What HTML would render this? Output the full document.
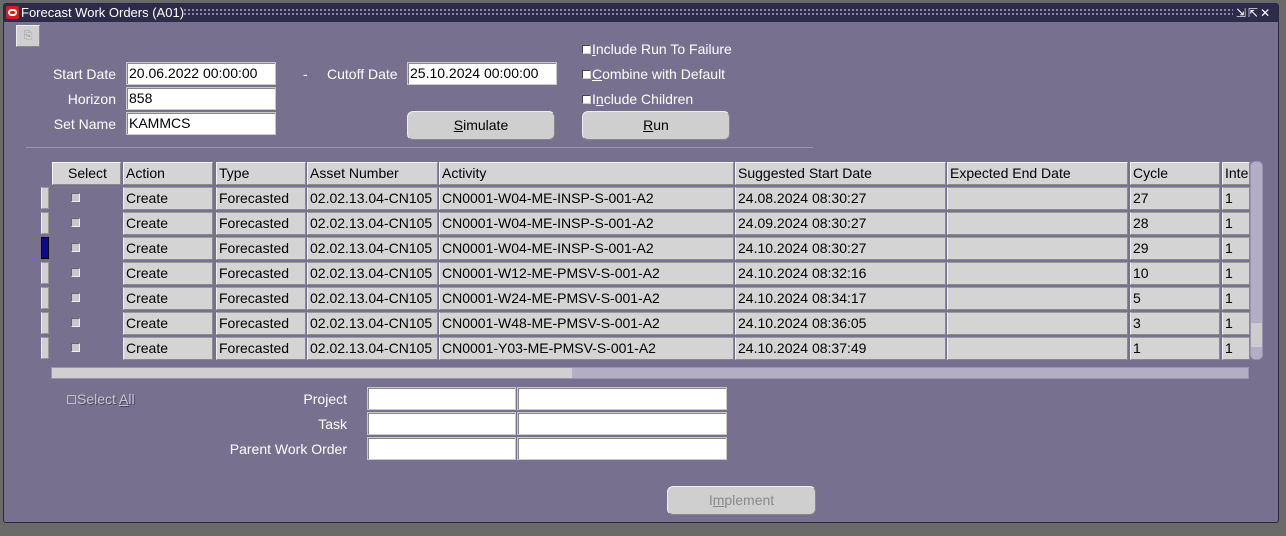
<!DOCTYPE html>
<html><head><meta charset="utf-8"><style>
*{box-sizing:border-box;margin:0;padding:0}
body{width:1286px;height:536px;background:#6a6a6a;position:relative;overflow:hidden;font-family:"Liberation Sans",sans-serif;font-size:14px;color:#000}
.a{position:absolute}
#win{left:3px;top:3px;width:1276px;height:520px;background:#77718f;border:1px solid #2a2840;border-radius:3px}
#tb{left:4px;top:4px;width:1274px;height:18px;background:#2e2b4a;color:#fff;font-size:13px;line-height:18px;padding-left:17px}
.dots{left:183px;top:8px;width:1050px;height:9px;background-image:radial-gradient(circle,#9c98b4 0.8px,transparent 1.2px);background-size:4px 4px}
.lbl{color:#fff;font-size:14px;text-align:right}
.fld{background:#fff;border:1px solid #c9c9c9;box-shadow:inset 1px 1px 0 #888;height:23px;line-height:21px;padding-left:2px;font-size:14px}
.btn{background:#cfcfcf;border:1px solid #eee;border-right-color:#888;border-bottom-color:#888;border-radius:6px;text-align:center;height:29px;line-height:27px}
.hd{background:#d4d4d4;border:1px solid #f4f4f4;border-right-color:#8a8a8a;border-bottom-color:#8a8a8a;height:23px;line-height:21px;padding-left:2px}
.c{background:#d4d4d4;border:1px solid #8a8a8a;border-top-color:#9a9a9a;border-left-color:#f0f0f0;height:23px;line-height:21px;padding-left:2px;overflow:hidden;white-space:nowrap}
.cb{width:9px;height:9px;background:#c8c8c8;border:1px solid #666;border-right-color:#eee;border-bottom-color:#eee}
.mk{width:8px;height:22px;background:#d0d0d0;border:1px solid #999;border-left-color:#eee}
.ck{color:#fff}
.ck i{display:inline-block;width:9px;height:9px;background:#fff;border:1px solid #444;border-right-color:#ccc;border-bottom-color:#ccc;margin-right:1px;vertical-align:0}
</style></head><body>
<div id="win" class="a"></div>
<div id="tb" class="a">Forecast Work Orders (A01)</div>
<div class="a" style="left:6px;top:6px;width:13px;height:13px;background:#d0201c;border-radius:2px"><div style="margin:3px 2px;width:9px;height:7px;border:2px solid #fff;border-radius:4px"></div></div>
<div class="a dots"></div>
<div class="a" style="left:1236px;top:5px;color:#fff;font-size:12px;line-height:16px;letter-spacing:2px">⇲⇱✕</div>
<div class="a" style="left:16px;top:25px;width:24px;height:22px;background:#cfcfcf;border:1px solid #eee;border-right-color:#888;border-bottom-color:#888;color:#999;font-size:11px;text-align:center;line-height:20px">⎘</div>

<div class="a lbl" style="left:20px;top:66px;width:96px">Start Date</div>
<div class="a lbl" style="left:20px;top:91px;width:96px">Horizon</div>
<div class="a lbl" style="left:20px;top:116px;width:96px">Set Name</div>
<div class="a fld" style="left:126px;top:62px;width:150px">20.06.2022 00:00:00</div>
<div class="a fld" style="left:126px;top:87px;width:150px">858</div>
<div class="a fld" style="left:126px;top:112px;width:150px">KAMMCS</div>
<div class="a lbl" style="left:303px;top:66px">-</div>
<div class="a lbl" style="left:327px;top:66px">Cutoff Date</div>
<div class="a fld" style="left:407px;top:62px;width:150px">25.10.2024 00:00:00</div>
<div class="a ck" style="left:582px;top:41px"><i></i><u>I</u>nclude Run To Failure</div>
<div class="a ck" style="left:582px;top:66px"><i></i><u>C</u>ombine with Default</div>
<div class="a ck" style="left:582px;top:91px"><i></i>I<u>n</u>clude Children</div>
<div class="a btn" style="left:407px;top:111px;width:148px"><u>S</u>imulate</div>
<div class="a btn" style="left:582px;top:111px;width:148px"><u>R</u>un</div>
<div class="a" style="left:26px;top:147px;width:787px;height:1px;background:#3a3656;border-bottom:1px solid #9a96b0"></div>

<div class="a hd" style="left:52px;top:162px;width:69px;text-align:center">Select</div>
<div class="a hd" style="left:123px;top:162px;width:90px">Action</div>
<div class="a hd" style="left:216px;top:162px;width:90px">Type</div>
<div class="a hd" style="left:307px;top:162px;width:131px">Asset Number</div>
<div class="a hd" style="left:439px;top:162px;width:295px">Activity</div>
<div class="a hd" style="left:735px;top:162px;width:211px">Suggested Start Date</div>
<div class="a hd" style="left:947px;top:162px;width:181px">Expected End Date</div>
<div class="a hd" style="left:1130px;top:162px;width:90px">Cycle</div>
<div class="a hd" style="left:1222px;top:162px;width:28px;overflow:hidden;white-space:nowrap">Interval</div>

<div class="a" style="left:1250px;top:161px;width:13px;height:199px;background:#b3aec6;border-radius:5px;border:1px solid #9993b0"></div>
<div class="a" style="left:1251px;top:323px;width:11px;height:24px;background:#ccc"></div>

<div id="rows"></div>
<!-- rows -->
<div class="a mk" style="left:41px;top:187px"></div><div class="a cb" style="left:71px;top:193px"></div>
<div class="a c" style="left:123px;top:187px;width:90px">Create</div><div class="a c" style="left:216px;top:187px;width:90px">Forecasted</div><div class="a c" style="left:307px;top:187px;width:131px">02.02.13.04-CN105</div><div class="a c" style="left:439px;top:187px;width:295px">CN0001-W04-ME-INSP-S-001-A2</div><div class="a c" style="left:735px;top:187px;width:211px">24.08.2024 08:30:27</div><div class="a c" style="left:947px;top:187px;width:181px"></div><div class="a c" style="left:1130px;top:187px;width:90px">27</div><div class="a c" style="left:1222px;top:187px;width:28px">1</div>
<div class="a mk" style="left:41px;top:212px"></div><div class="a cb" style="left:71px;top:218px"></div>
<div class="a c" style="left:123px;top:212px;width:90px">Create</div><div class="a c" style="left:216px;top:212px;width:90px">Forecasted</div><div class="a c" style="left:307px;top:212px;width:131px">02.02.13.04-CN105</div><div class="a c" style="left:439px;top:212px;width:295px">CN0001-W04-ME-INSP-S-001-A2</div><div class="a c" style="left:735px;top:212px;width:211px">24.09.2024 08:30:27</div><div class="a c" style="left:947px;top:212px;width:181px"></div><div class="a c" style="left:1130px;top:212px;width:90px">28</div><div class="a c" style="left:1222px;top:212px;width:28px">1</div>
<div class="a mk" style="left:41px;top:237px;background:#0a0a8a;border-color:#000"></div><div class="a cb" style="left:71px;top:243px"></div>
<div class="a c" style="left:123px;top:237px;width:90px">Create</div><div class="a c" style="left:216px;top:237px;width:90px">Forecasted</div><div class="a c" style="left:307px;top:237px;width:131px">02.02.13.04-CN105</div><div class="a c" style="left:439px;top:237px;width:295px">CN0001-W04-ME-INSP-S-001-A2</div><div class="a c" style="left:735px;top:237px;width:211px">24.10.2024 08:30:27</div><div class="a c" style="left:947px;top:237px;width:181px"></div><div class="a c" style="left:1130px;top:237px;width:90px">29</div><div class="a c" style="left:1222px;top:237px;width:28px">1</div>
<div class="a mk" style="left:41px;top:262px"></div><div class="a cb" style="left:71px;top:268px"></div>
<div class="a c" style="left:123px;top:262px;width:90px">Create</div><div class="a c" style="left:216px;top:262px;width:90px">Forecasted</div><div class="a c" style="left:307px;top:262px;width:131px">02.02.13.04-CN105</div><div class="a c" style="left:439px;top:262px;width:295px">CN0001-W12-ME-PMSV-S-001-A2</div><div class="a c" style="left:735px;top:262px;width:211px">24.10.2024 08:32:16</div><div class="a c" style="left:947px;top:262px;width:181px"></div><div class="a c" style="left:1130px;top:262px;width:90px">10</div><div class="a c" style="left:1222px;top:262px;width:28px">1</div>
<div class="a mk" style="left:41px;top:287px"></div><div class="a cb" style="left:71px;top:293px"></div>
<div class="a c" style="left:123px;top:287px;width:90px">Create</div><div class="a c" style="left:216px;top:287px;width:90px">Forecasted</div><div class="a c" style="left:307px;top:287px;width:131px">02.02.13.04-CN105</div><div class="a c" style="left:439px;top:287px;width:295px">CN0001-W24-ME-PMSV-S-001-A2</div><div class="a c" style="left:735px;top:287px;width:211px">24.10.2024 08:34:17</div><div class="a c" style="left:947px;top:287px;width:181px"></div><div class="a c" style="left:1130px;top:287px;width:90px">5</div><div class="a c" style="left:1222px;top:287px;width:28px">1</div>
<div class="a mk" style="left:41px;top:312px"></div><div class="a cb" style="left:71px;top:318px"></div>
<div class="a c" style="left:123px;top:312px;width:90px">Create</div><div class="a c" style="left:216px;top:312px;width:90px">Forecasted</div><div class="a c" style="left:307px;top:312px;width:131px">02.02.13.04-CN105</div><div class="a c" style="left:439px;top:312px;width:295px">CN0001-W48-ME-PMSV-S-001-A2</div><div class="a c" style="left:735px;top:312px;width:211px">24.10.2024 08:36:05</div><div class="a c" style="left:947px;top:312px;width:181px"></div><div class="a c" style="left:1130px;top:312px;width:90px">3</div><div class="a c" style="left:1222px;top:312px;width:28px">1</div>
<div class="a mk" style="left:41px;top:337px"></div><div class="a cb" style="left:71px;top:343px"></div>
<div class="a c" style="left:123px;top:337px;width:90px">Create</div><div class="a c" style="left:216px;top:337px;width:90px">Forecasted</div><div class="a c" style="left:307px;top:337px;width:131px">02.02.13.04-CN105</div><div class="a c" style="left:439px;top:337px;width:295px">CN0001-Y03-ME-PMSV-S-001-A2</div><div class="a c" style="left:735px;top:337px;width:211px">24.10.2024 08:37:49</div><div class="a c" style="left:947px;top:337px;width:181px"></div><div class="a c" style="left:1130px;top:337px;width:90px">1</div><div class="a c" style="left:1222px;top:337px;width:28px">1</div>

<div class="a" style="left:51px;top:367px;width:1198px;height:12px;background:#b3aec6;border:1px solid #9993b0"></div>
<div class="a" style="left:52px;top:368px;width:520px;height:10px;background:#d0d0d0"></div>

<div class="a" style="left:67px;top:391px;color:#c8c6d4;text-shadow:1px 1px 0 #4a4660"><i style="display:inline-block;width:9px;height:9px;border:1px solid #bbb;margin-right:1px"></i>Select <u>A</u>ll</div>
<div class="a lbl" style="left:200px;top:391px;width:147px">Project</div>
<div class="a lbl" style="left:200px;top:416px;width:147px">Task</div>
<div class="a lbl" style="left:200px;top:441px;width:147px">Parent Work Order</div>
<div class="a fld" style="left:367px;top:387px;width:149px"></div><div class="a fld" style="left:517px;top:387px;width:210px"></div>
<div class="a fld" style="left:367px;top:412px;width:149px"></div><div class="a fld" style="left:517px;top:412px;width:210px"></div>
<div class="a fld" style="left:367px;top:437px;width:149px"></div><div class="a fld" style="left:517px;top:437px;width:210px"></div>
<div class="a btn" style="left:667px;top:486px;width:149px;color:#8a8a8a">I<u>m</u>plement</div>
</body></html>
